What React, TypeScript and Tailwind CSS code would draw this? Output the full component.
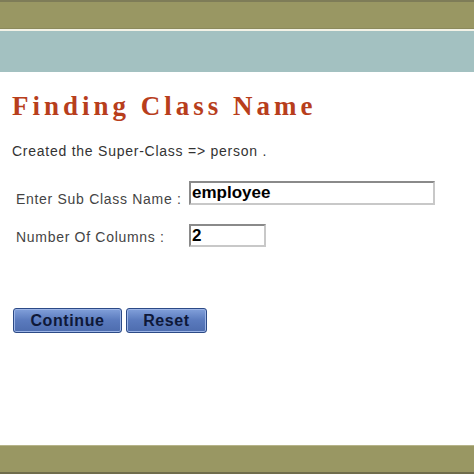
import React from "react";

export default function App() {
  return (
    <div className="w-[474px] h-[474px] bg-white flex flex-col font-['Liberation_Sans',Arial,sans-serif] overflow-hidden">
      {/* top banner */}
      <div className="h-[2px] bg-[#7e7c58]" />
      <div className="h-[27px] bg-[#999763] border-b border-[#8c8a5c]" />
      <div className="h-[2px] bg-[#f2f2e6]" />
      <div className="h-[41px] bg-[#a3c1c1]" />

      <main className="flex-1 px-3 pt-[19px]">
        <h1 className="font-['Liberation_Serif',serif] text-[27px] leading-[30px] tracking-[4px] text-[#b83e1c] font-semibold">
          Finding Class Name
        </h1>
        <p className="mt-[22px] text-[14px] leading-[16px] tracking-[0.75px] text-[#333]">Created the Super-Class =&gt; person .</p>

        <div className="mt-[22px] pl-1 flex flex-col gap-[19px]">
          <div className="flex items-end">
            <label className="w-[173px] text-[14px] leading-[16px] tracking-[0.7px] text-[#444] -mb-[2px]">Enter Sub Class Name :</label>
            <input
              defaultValue="employee"
              className="w-[246px] h-[24px] border-2 border-[#8a8a8a] border-r-[#c8c8c8] border-b-[#c8c8c8] px-[1px] text-[17px] font-bold text-black outline-none"
            />
          </div>
          <div className="flex items-center">
            <label className="w-[173px] text-[14px] leading-[16px] tracking-[0.7px] text-[#444] pt-[3px]">Number Of Columns :</label>
            <input
              defaultValue="2"
              className="w-[77px] h-[23px] border-2 border-[#8a8a8a] border-r-[#c8c8c8] border-b-[#c8c8c8] px-[1px] text-[17px] font-bold text-black outline-none"
            />
          </div>
        </div>

        <div className="mt-[61px] flex gap-[4px] pl-[1px]">
          <button className="w-[109px] h-[25px] rounded-[3px] border border-[#2c4a86] bg-gradient-to-b from-[#82a0da] via-[#5a7abd] to-[#4d6cae] shadow-[inset_0_0_0_1px_#9db5e6] text-[16px] tracking-[0.6px] font-bold text-[#0e1838]">
            Continue
          </button>
          <button className="w-[81px] h-[25px] rounded-[3px] border border-[#2c4a86] bg-gradient-to-b from-[#82a0da] via-[#5a7abd] to-[#4d6cae] shadow-[inset_0_0_0_1px_#9db5e6] text-[16px] tracking-[0.6px] font-bold text-[#0e1838]">
            Reset
          </button>
        </div>
      </main>

      {/* bottom banner */}
      <div className="h-[1px] bg-[#b6b48a]" />
      <div className="h-[26px] bg-[#999763]" />
      <div className="h-[2px] bg-[#6f6d4c]" />
    </div>
  );
}
